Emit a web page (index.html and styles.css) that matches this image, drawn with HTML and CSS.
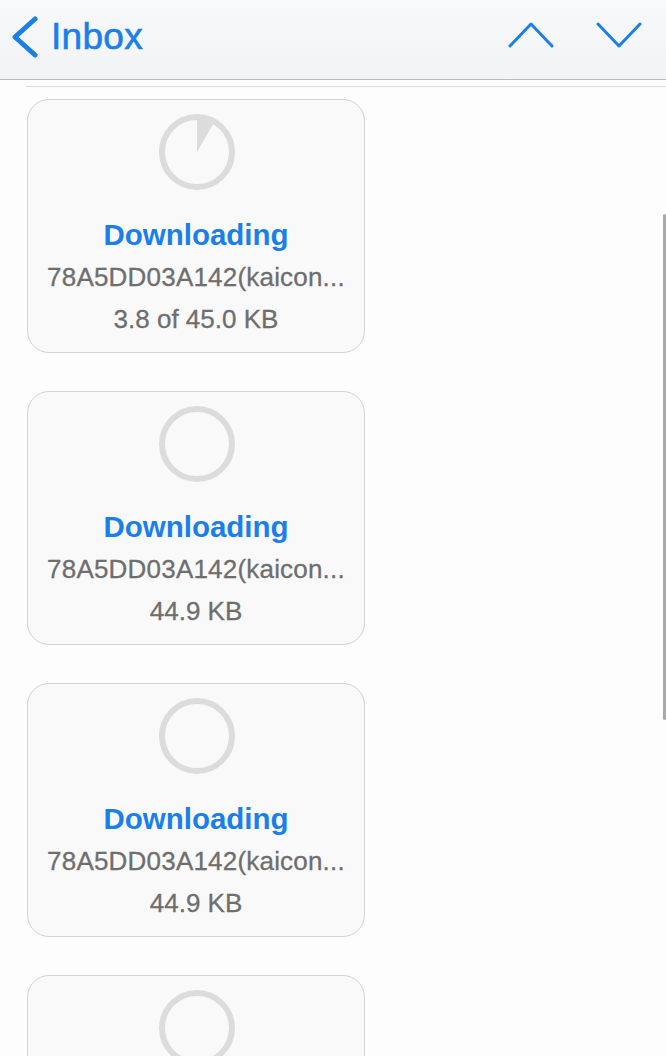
FILE: index.html
```html
<!DOCTYPE html>
<html>
<head>
<meta charset="utf-8">
<link rel="stylesheet" href="styles.css">
</head>
<body>
<header class="navbar">
  <div class="back">
    <svg class="back-icon" width="30" height="42" viewBox="0 0 30 42"><path d="M25 3 L5 21 L25 39" fill="none" stroke="#1a7fe9" stroke-width="5" stroke-linecap="round" stroke-linejoin="round"/></svg>
    <span class="back-label">Inbox</span>
  </div>
  <div class="arrows">
    <svg width="46" height="28" viewBox="0 0 46 28"><path d="M2 25 L23 3 L44 25" fill="none" stroke="#1a7fe9" stroke-width="3" stroke-linecap="round" stroke-linejoin="round"/></svg>
    <svg width="46" height="28" viewBox="0 0 46 28"><path d="M2 3 L23 25 L44 3" fill="none" stroke="#1a7fe9" stroke-width="3" stroke-linecap="round" stroke-linejoin="round"/></svg>
  </div>
</header>
<main class="content">
  <div class="divider"></div>
  <div class="list">
    <div class="card">
      <svg class="progress" width="82" height="82" viewBox="0 0 82 82">
        <circle cx="41" cy="41" r="35" fill="none" stroke="#dcdcdc" stroke-width="6"/>
        <path d="M41 41 L41 6 A35 35 0 0 1 58.5 10.7 Z" fill="#dcdcdc"/>
      </svg>
      <div class="status">Downloading</div>
      <div class="name">78A5DD03A142(kaicon...</div>
      <div class="size">3.8 of 45.0 KB</div>
    </div>
    <div class="card">
      <svg class="progress" width="82" height="82" viewBox="0 0 82 82">
        <circle cx="41" cy="41" r="35" fill="none" stroke="#dcdcdc" stroke-width="6"/>
      </svg>
      <div class="status">Downloading</div>
      <div class="name">78A5DD03A142(kaicon...</div>
      <div class="size">44.9 KB</div>
    </div>
    <div class="card">
      <svg class="progress" width="82" height="82" viewBox="0 0 82 82">
        <circle cx="41" cy="41" r="35" fill="none" stroke="#dcdcdc" stroke-width="6"/>
      </svg>
      <div class="status">Downloading</div>
      <div class="name">78A5DD03A142(kaicon...</div>
      <div class="size">44.9 KB</div>
    </div>
    <div class="card">
      <svg class="progress" width="82" height="82" viewBox="0 0 82 82">
        <circle cx="41" cy="41" r="35" fill="none" stroke="#dcdcdc" stroke-width="6"/>
      </svg>
    </div>
  </div>
  <div class="scrollbar"></div>
</main>
</body>
</html>
```
FILE: styles.css
```css
html, body {
  margin: 0;
  padding: 0;
  width: 666px;
  height: 1056px;
  overflow: hidden;
  background: #fdfdfd;
  font-family: "Liberation Sans", Arial, sans-serif;
}

.navbar {
  height: 80px;
  box-sizing: border-box;
  border-bottom: 1px solid #bcbcbc;
  background: linear-gradient(#f8f9fa, #f2f3f5);
  display: flex;
  align-items: center;
  justify-content: space-between;
  padding: 0 24px 0 10px;
}

.back {
  display: flex;
  align-items: center;
  gap: 11px;
  margin-top: -6px;
}

.back-icon {
  display: block;
}

.back-label {
  color: #1a7fe9;
  font-size: 37px;
  line-height: 40px;
  -webkit-text-stroke: 0.6px #1a7fe9;
  letter-spacing: 0.3px;
}

.arrows {
  display: flex;
  gap: 42px;
  margin-top: -10px;
}

.arrows svg {
  display: block;
}

.content {
  position: relative;
}

.divider {
  margin: 6px 0 0 26px;
  border-top: 1px solid #dadada;
}

.list {
  padding: 12px 0 0 27px;
  display: flex;
  flex-direction: column;
  gap: 38px;
}

.card {
  width: 338px;
  height: 254px;
  box-sizing: border-box;
  border: 1.5px solid #d2d2d2;
  border-radius: 22px;
  background: #f9f9f9;
  display: flex;
  flex-direction: column;
  align-items: center;
  padding-top: 11px;
  flex-shrink: 0;
}

.progress {
  display: block;
  margin-left: 1px;
}

.status {
  margin-top: 21px;
  color: #1a7fe9;
  font-weight: bold;
  font-size: 29.5px;
  line-height: 42px;
}

.name, .size {
  color: #6e6e6e;
  font-size: 26px;
  line-height: 42px;
  -webkit-text-stroke: 0.3px #6e6e6e;
}

.name {
  letter-spacing: 0.2px;
}

.scrollbar {
  position: absolute;
  right: 0;
  top: 128px;
  width: 3px;
  height: 506px;
  border-radius: 2px;
  background: #a9a9a9;
}
```
